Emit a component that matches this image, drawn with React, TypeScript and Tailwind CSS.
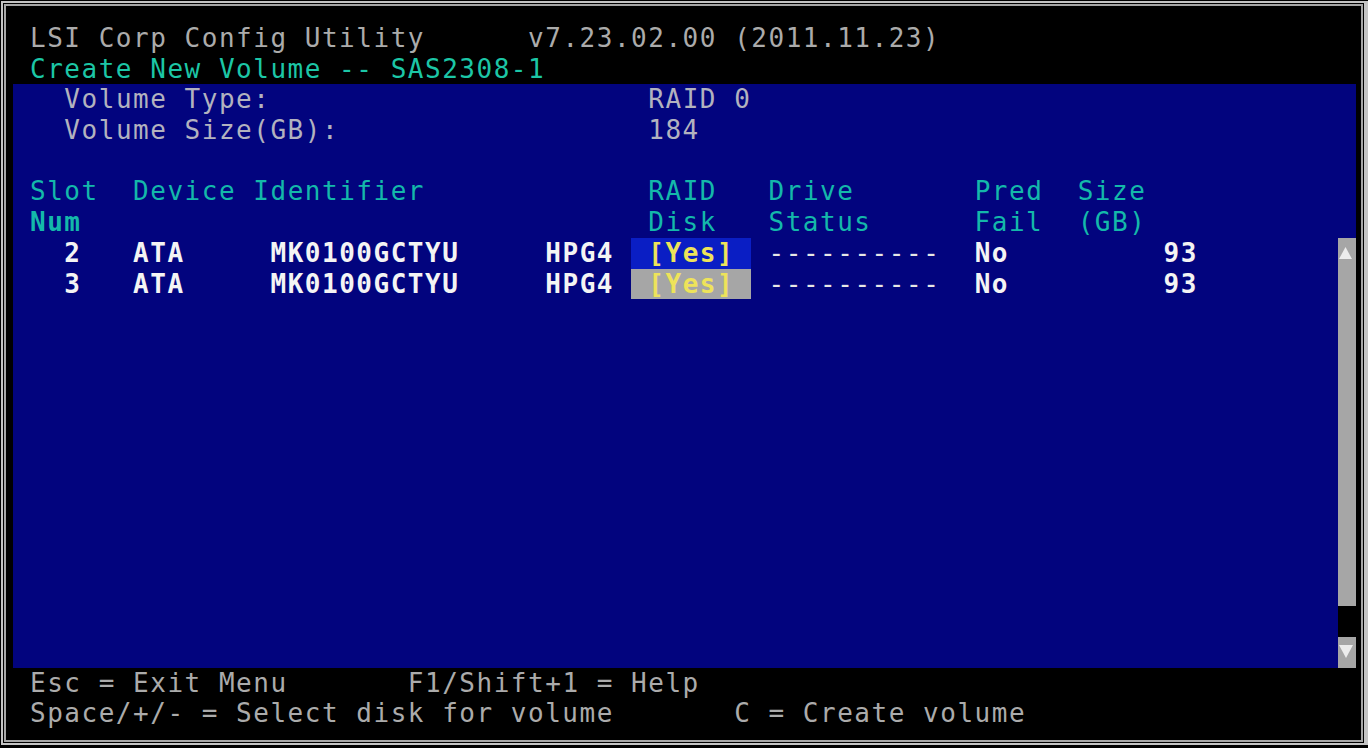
import React from "react";

type Seg = [number, string, string?];

function Row({ segs, base = "" }: { segs: Seg[]; base?: string }) {
  let col = 0;
  const out: React.ReactNode[] = [];
  segs.forEach(([c, t, cls], i) => {
    if (c > col) out.push(<span key={"s" + i}>{" ".repeat(c - col)}</span>);
    out.push(
      <span key={i} className={cls}>
        {t}
      </span>
    );
    col = Math.max(c, col) + t.length;
  });
  return <div className={`h-[30.7px] whitespace-pre ${base}`}>{out}</div>;
}

const GRAY = "text-[#ababab]";
const GRAYB = "text-[#b2b2bf]";
const TEAL = "text-[#1cc6a6]";
const HEAD = "text-[#14b8aa]";
const WHITE = "text-[#f4f4f4] font-bold";

export default function App() {
  return (
    <div className="w-[1368px] h-[748px] bg-black pl-px pt-px pb-[3px] font-[family-name:'DejaVu_Sans_Mono',monospace] text-[26px] tracking-[1.52px] leading-[30.7px]">
      <div className="h-full border-2 border-r-4 border-[#c4c4c4] bg-black p-px">
        <div className="h-full border-2 border-[#a6a6a6] bg-black flex flex-col">
          {/* header */}
          <div className="pt-[17px] pl-[24px]">
            <Row
              segs={[
                [0, "LSI Corp Config Utility", GRAY],
                [29, "v7.23.02.00 (2011.11.23)", GRAY],
              ]}
            />
            <Row segs={[[0, "Create New Volume -- SAS2308-1", TEAL]]} />
          </div>

          {/* blue body */}
          <div className="ml-[7px] mr-[5px] bg-[#02047e] flex h-[583.3px]">
            <div className="flex-1 pl-[17px]">
              <Row
                segs={[
                  [2, "Volume Type:", GRAYB],
                  [36, "RAID 0", GRAYB],
                ]}
              />
              <Row
                segs={[
                  [2, "Volume Size(GB):", GRAYB],
                  [36, "184", GRAYB],
                ]}
              />
              <Row segs={[]} />
              <Row
                segs={[
                  [0, "Slot", HEAD],
                  [6, "Device", HEAD],
                  [13, "Identifier", HEAD],
                  [36, "RAID", HEAD],
                  [43, "Drive", HEAD],
                  [55, "Pred", HEAD],
                  [61, "Size", HEAD],
                ]}
              />
              <Row
                segs={[
                  [0, "Num", HEAD + " font-bold"],
                  [36, "Disk", HEAD],
                  [43, "Status", HEAD],
                  [55, "Fail", HEAD],
                  [61, "(GB)", HEAD],
                ]}
              />
              <Row
                segs={[
                  [2, "2", WHITE],
                  [6, "ATA", WHITE],
                  [14, "MK0100GCTYU", WHITE],
                  [30, "HPG4", WHITE],
                  [
                    35,
                    " [Yes] ",
                    "inline-block h-[30.7px] align-top bg-[#0a1ec4] text-[#eee35a] font-bold",
                  ],
                  [43, "----------", "text-[#e6e6e6]"],
                  [55, "No", WHITE],
                  [66, "93", WHITE],
                ]}
              />
              <Row
                segs={[
                  [2, "3", WHITE],
                  [6, "ATA", WHITE],
                  [14, "MK0100GCTYU", WHITE],
                  [30, "HPG4", WHITE],
                  [
                    35,
                    " [Yes] ",
                    "inline-block h-[30.7px] align-top bg-[#a6a6a6] text-[#eee35a] font-bold",
                  ],
                  [43, "----------", "text-[#e6e6e6]"],
                  [55, "No", WHITE],
                  [66, "93", WHITE],
                ]}
              />
            </div>

            {/* scrollbar */}
            <div className="w-[18px] flex flex-col">
              <div className="h-[153.5px]" />
              <div className="h-[368.4px] bg-[#a6a6a6] pt-[9px] pl-px">
                <svg width="13" height="12" viewBox="0 0 13 12">
                  <polygon points="6.5,0 13,12 0,12" fill="#ececec" />
                </svg>
              </div>
              <div className="h-[30.7px] bg-black" />
              <div className="h-[30.7px] bg-[#a6a6a6] pt-[8px] pl-px">
                <svg width="14" height="13" viewBox="0 0 14 13">
                  <polygon points="0,0 14,0 7,13" fill="#ececec" />
                </svg>
              </div>
            </div>
          </div>

          {/* footer */}
          <div className="pl-[24px]">
            <Row
              segs={[
                [0, "Esc = Exit Menu", GRAY],
                [22, "F1/Shift+1 = Help", GRAY],
              ]}
            />
            <Row
              segs={[
                [0, "Space/+/- = Select disk for volume", GRAY],
                [41, "C = Create volume", GRAY],
              ]}
            />
          </div>
        </div>
      </div>
    </div>
  );
}
